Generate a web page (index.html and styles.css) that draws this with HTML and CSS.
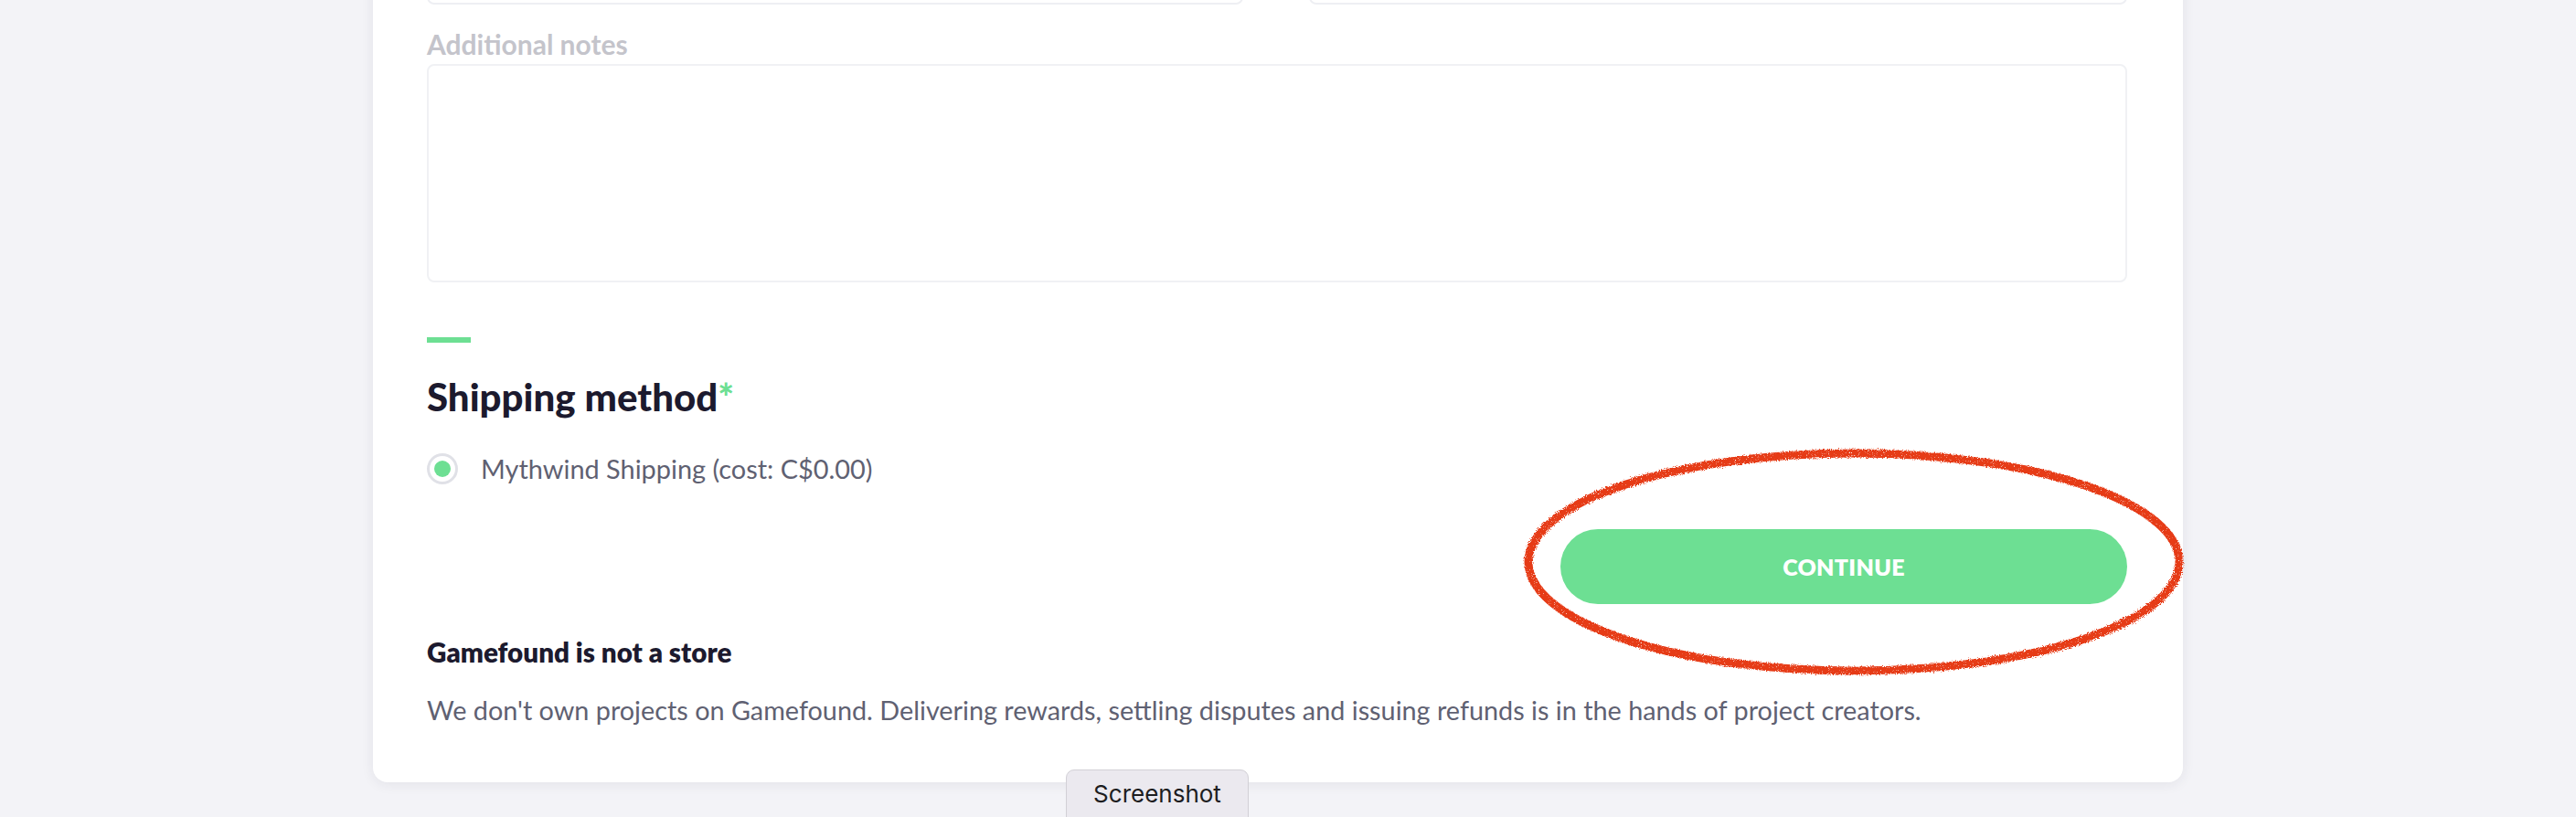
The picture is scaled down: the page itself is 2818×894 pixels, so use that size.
FILE: index.html
```html
<!DOCTYPE html>
<html lang="en">
<head>
<meta charset="utf-8">
<title>Shipping</title>
<link rel="stylesheet" href="styles.css">
</head>
<body>
<main class="card">
  <div class="inputs-row">
    <div class="input"></div>
    <div class="input"></div>
  </div>
  <label class="field-label">Additional notes</label>
  <div class="textarea"></div>
  <div class="accent-bar"></div>
  <h2 class="section-title">Shipping method<span class="req">*</span></h2>
  <div class="radio-row">
    <span class="radio"><span class="radio-dot"></span></span>
    <span class="radio-label">Mythwind Shipping (cost: C$0.00)</span>
  </div>
  <div class="actions">
    <button class="continue">CONTINUE</button>
  </div>
  <h3 class="note-title">Gamefound is not a store</h3>
  <p class="note-text">We don't own projects on Gamefound. Delivering rewards, settling disputes and issuing refunds is in the hands of project creators.</p>
</main>
<svg class="annotation" width="740" height="260" viewBox="0 0 740 260">
  <defs>
    <filter id="rough" x="-5%" y="-5%" width="110%" height="110%">
      <feTurbulence type="fractalNoise" baseFrequency="0.9" numOctaves="2" seed="3" result="n"/>
      <feDisplacementMap in="SourceGraphic" in2="n" scale="5" result="d"/>
      <feTurbulence type="fractalNoise" baseFrequency="1.6" numOctaves="1" seed="7" result="g"/>
      <feColorMatrix in="g" type="matrix" values="0 0 0 0 0  0 0 0 0 0  0 0 0 0 0  5 0 0 0 -0.9" result="ga"/>
      <feComposite in="d" in2="ga" operator="in"/>
    </filter>
  </defs>
  <ellipse cx="368" cy="130" rx="356" ry="119" fill="none" stroke="#e63a17" stroke-width="9" filter="url(#rough)"/>
</svg>
<div class="tooltip">Screenshot</div>
</body>
</html>
```
FILE: styles.css
```css
html, body {
  margin: 0;
  padding: 0;
}
body {
  background: #f3f3f7;
  width: 2818px;
  height: 894px;
  overflow: hidden;
  position: relative;
  font-family: Lato, "Noto Sans", sans-serif;
}
.card {
  box-sizing: border-box;
  width: 1980px;
  margin: -60px 0 0 408px;
  padding: 0 61px 63px 59px;
  background: #ffffff;
  border-radius: 0 0 16px 16px;
  box-shadow: 0 2px 14px rgba(40, 40, 70, 0.08);
}
.inputs-row {
  display: grid;
  grid-template-columns: 893px 895px;
  column-gap: 72px;
  height: 65px;
}
.input {
  box-sizing: border-box;
  border: 2px solid #eeeff3;
  border-radius: 8px;
  height: 100%;
}
.field-label {
  display: block;
  margin-top: 27px;
  font-size: 30px;
  line-height: 32px;
  font-weight: 700;
  color: #c4c4cb;
}
.textarea {
  box-sizing: border-box;
  margin-top: 6px;
  height: 239px;
  border: 2px solid #f0f1f4;
  border-radius: 8px;
}
.accent-bar {
  margin-top: 60px;
  width: 48px;
  height: 6px;
  background: #6ddf93;
}
.section-title {
  margin: 35px 0 0;
  font-size: 42px;
  line-height: 48px;
  font-weight: 900;
  color: #1c1a2e;
}
.req {
  color: #6ddf93;
}
.radio-row {
  margin-top: 38px;
  display: flex;
  align-items: center;
  gap: 25px;
  height: 34px;
}
.radio {
  box-sizing: border-box;
  width: 34px;
  height: 34px;
  border: 3px solid #e0e1e7;
  border-radius: 50%;
  display: flex;
  align-items: center;
  justify-content: center;
}
.radio-dot {
  width: 18px;
  height: 18px;
  border-radius: 50%;
  background: #6ddf93;
}
.radio-label {
  font-size: 28.9px;
  line-height: 34px;
  color: #5f6172;
}
.actions {
  margin-top: 49px;
  display: flex;
  justify-content: flex-end;
}
.continue {
  width: 620px;
  height: 82px;
  border: 0;
  border-radius: 41px;
  background: #6ddf93;
  color: #ffffff;
  font-family: Lato, "Noto Sans", sans-serif;
  font-size: 25px;
  font-weight: 800;
  letter-spacing: 0.3px;
  padding: 0;
}
.note-title {
  margin: 37px 0 0;
  font-size: 29.6px;
  line-height: 32px;
  font-weight: 800;
  color: #1c1a2e;
}
.note-text {
  margin: 31px 0 0;
  font-size: 28.8px;
  line-height: 32px;
  color: #5f6172;
}
.annotation {
  position: absolute;
  left: 1660px;
  top: 485px;
}
.tooltip {
  position: absolute;
  left: 1166px;
  top: 842px;
  box-sizing: border-box;
  width: 200px;
  height: 64px;
  padding-top: 10px;
  background: #ebe9ef;
  border: 1.5px solid #d2d0d6;
  border-radius: 9px;
  text-align: center;
  font-family: Inter, "Liberation Sans", sans-serif;
  font-size: 26px;
  line-height: 32px;
  color: #1d1d1f;
}
```
